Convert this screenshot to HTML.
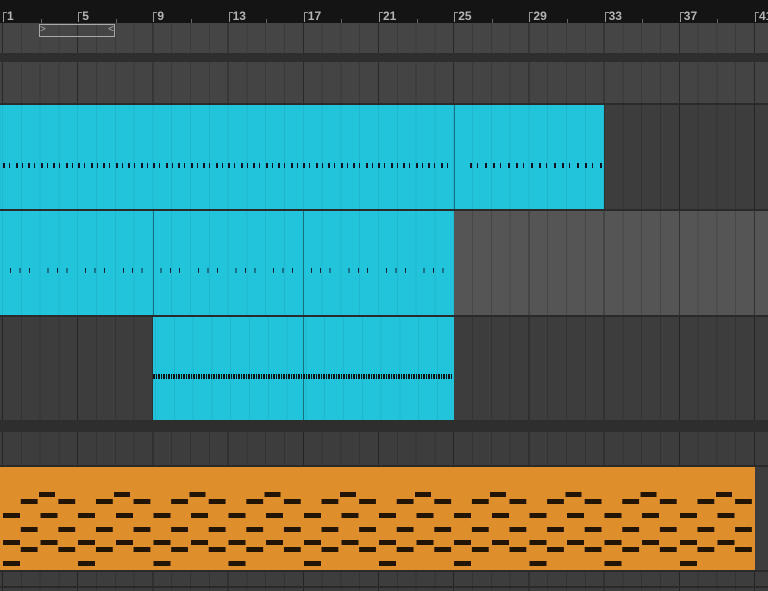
<!DOCTYPE html>
<html><head><style>
*{margin:0;padding:0;box-sizing:border-box}
body{width:768px;height:591px;overflow:hidden;background:#3a3a3a;position:relative;font-family:"Liberation Sans",sans-serif}
.a{position:absolute}
.grid{background-image:repeating-linear-gradient(90deg,rgba(0,0,0,.3) 0 1px,transparent 1px 75.2px),repeating-linear-gradient(90deg,rgba(0,0,0,.16) 0 1px,transparent 1px 18.8px);background-position:2px 0,2px 0}
.cy{background-color:#22c4dc;background-image:repeating-linear-gradient(90deg,rgba(0,60,80,.1) 0 1px,transparent 1px 18.8px);background-position:2px 0}
.num{position:absolute;top:9px;font-size:12px;font-weight:bold;color:#b5b5b5}
.tk{position:absolute;top:12px;width:4px;height:10px;border-left:1px solid #999;border-top:1px solid #999}
.n{position:absolute;left:0;height:5px;width:755px}
</style></head><body>
<div class="a" style="left:0;top:0;width:768px;height:23px;background:#141414"></div>
<div id="ruler"></div>
<div class="a grid" style="left:0;top:23px;width:768px;height:30px;background-color:#454545"></div>
<div class="a" style="left:39px;top:24px;width:76px;height:13px;border:1px solid #aaa;color:#aaa;font-size:10px;line-height:10px">&gt;<span style="float:right">&lt;</span></div>
<div class="a" style="left:0;top:53px;width:768px;height:9px;background:#2e2e2e"></div>
<div class="a grid" style="left:0;top:62px;width:768px;height:41px;background-color:#444"></div>
<div class="a" style="left:0;top:103px;width:768px;height:2px;background:#2a2a2a"></div>
<div class="a grid" style="left:0;top:105px;width:768px;height:104px;background-color:#3d3d3d"></div>
<div class="a cy" style="left:0;top:105px;width:604px;height:104px"></div>
<div class="a" style="left:454px;top:105px;width:1px;height:104px;background:#17707e"></div>
<div class="a" style="left:3px;top:163px;width:450px;height:5px;background:repeating-linear-gradient(90deg,#112 0 2px,transparent 2px 6px,#112 6px 7px,transparent 7px 13px,#112 13px 15px,transparent 15px 19px,#112 19px 20px,transparent 20px 25px)"></div>
<div class="a" style="left:470px;top:163px;width:132px;height:5px;background:repeating-linear-gradient(90deg,#112 0 2px,transparent 2px 7px,#112 7px 8px,transparent 8px 15px,#112 15px 17px,transparent 17px 23px)"></div>
<div class="a" style="left:0;top:209px;width:768px;height:2px;background:#2a2a2a"></div>
<div class="a grid" style="left:0;top:211px;width:768px;height:104px;background-color:#555"></div>
<div class="a cy" style="left:0;top:211px;width:454px;height:104px"></div>
<div class="a" style="left:153px;top:211px;width:1px;height:104px;background:#17707e"></div>
<div class="a" style="left:303px;top:211px;width:1px;height:104px;background:#17707e"></div>
<div class="a" style="left:10px;top:268px;width:440px;height:5px;background:repeating-linear-gradient(90deg,#123 0 1px,transparent 1px 9.4px,#123 9.4px 10.4px,transparent 10.4px 18.8px,#123 18.8px 19.8px,transparent 19.8px 37.6px)"></div>
<div class="a" style="left:0;top:315px;width:768px;height:2px;background:#2a2a2a"></div>
<div class="a grid" style="left:0;top:317px;width:768px;height:103px;background-color:#3d3d3d"></div>
<div class="a cy" style="left:153px;top:317px;width:301px;height:103px"></div>
<div class="a" style="left:303px;top:317px;width:1px;height:103px;background:#17707e"></div>
<div class="a" style="left:153px;top:374px;width:300px;height:5px;background:repeating-linear-gradient(90deg,#111 0 2px,transparent 2px 3px,#111 3px 4px,transparent 4px 5px)"></div>
<div class="a" style="left:0;top:420px;width:768px;height:12px;background:#2e2e2e"></div>
<div class="a grid" style="left:0;top:432px;width:768px;height:33px;background-color:#3d3d3d"></div>
<div class="a" style="left:0;top:465px;width:768px;height:2px;background:#2a2a2a"></div>
<div class="a grid" style="left:0;top:467px;width:768px;height:103px;background-color:#3d3d3d"></div>
<div class="a" style="left:0;top:467px;width:755px;height:103px;background:#de8e2b">
<div class="n" style="top:25px;background:repeating-linear-gradient(90deg,transparent 0 39px,#231506 39px 55px,transparent 55px 75.2px)"></div>
<div class="n" style="top:32px;background:repeating-linear-gradient(90deg,transparent 0 21px,#231506 21px 38px,transparent 38px 37.6px);background-size:37.6px 5px"></div>
<div class="n" style="top:46px;background:repeating-linear-gradient(90deg,transparent 0 3px,#231506 3px 20px,transparent 20px 37.6px)"></div>
<div class="n" style="top:60px;background:repeating-linear-gradient(90deg,transparent 0 21px,#231506 21px 38px,transparent 38px 37.6px);background-size:37.6px 5px"></div>
<div class="n" style="top:73px;background:repeating-linear-gradient(90deg,transparent 0 3px,#231506 3px 20px,transparent 20px 37.6px)"></div>
<div class="n" style="top:80px;background:repeating-linear-gradient(90deg,transparent 0 21px,#231506 21px 38px,transparent 38px 37.6px);background-size:37.6px 5px"></div>
<div class="n" style="top:94px;background:repeating-linear-gradient(90deg,transparent 0 3px,#231506 3px 20px,transparent 20px 75.2px)"></div>
</div>
<div class="a" style="left:0;top:570px;width:768px;height:2px;background:#2a2a2a"></div>
<div class="a grid" style="left:0;top:572px;width:768px;height:19px;background-color:#3d3d3d"></div>
<div class="a" style="left:0;top:586px;width:768px;height:2px;background:#2a2a2a"></div>
<script>
var r=document.getElementById('ruler'),h='';
for(var k=0;k<11;k++){var x=3+75.2*k;h+='<div class="tk" style="left:'+x+'px"></div><div class="num" style="left:'+(x+4)+'px">'+(1+4*k)+'</div>';
h+='<div class="a" style="left:'+(x+37.6)+'px;top:19px;width:1px;height:4px;background:#666"></div>';}
r.innerHTML=h;
</script>
</body></html>
